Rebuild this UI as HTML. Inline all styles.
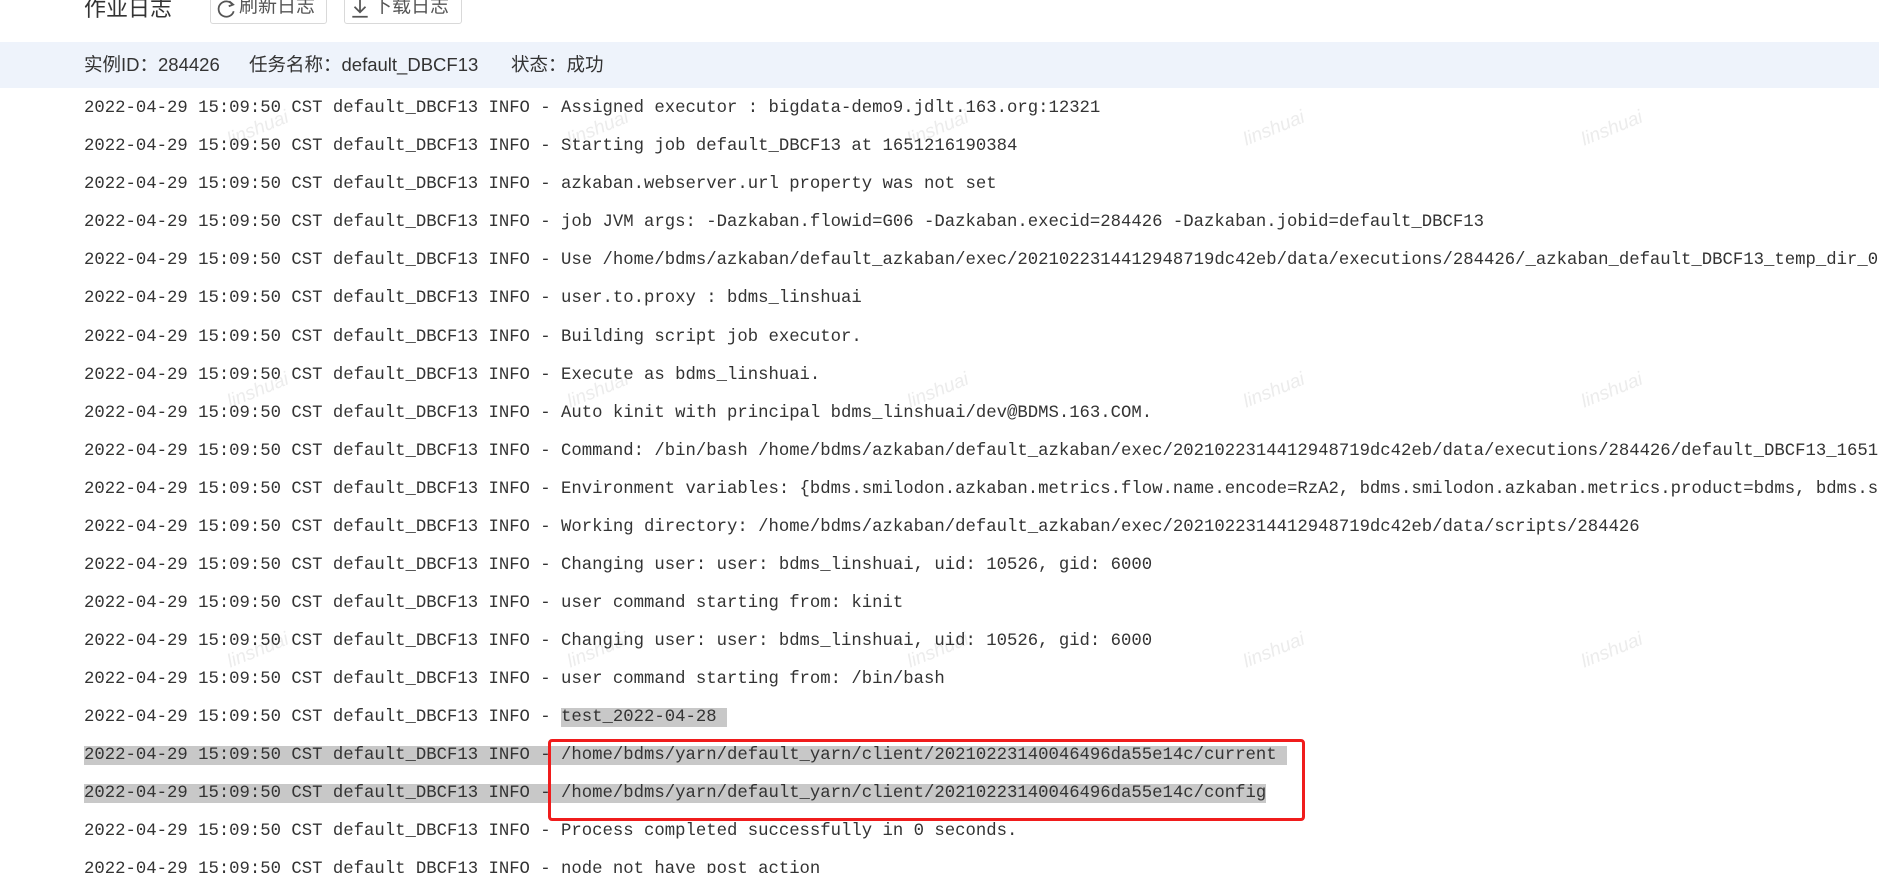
<!DOCTYPE html>
<html><head><meta charset="utf-8">
<style>
html,body{margin:0;padding:0;width:1879px;height:873px;overflow:hidden;background:#fff;position:relative}
.title{position:absolute;left:84px;top:-9px;font:22px "Liberation Sans","Noto Sans CJK SC",sans-serif;color:#333}
.btn{position:absolute;top:-8px;height:32px;border:1px solid #d9d9d9;border-radius:3px;background:#fff;font:19px "Liberation Sans","Noto Sans CJK SC",sans-serif;color:#555;line-height:28px;box-sizing:border-box;padding-left:28px}
.btn svg{position:absolute;left:4px;top:5px}
.banner{position:absolute;left:0;top:42px;width:1879px;height:46px;background:#eef3fb;font:18.5px "Liberation Sans","Noto Sans CJK SC",sans-serif;color:#333;line-height:46px}
.banner span{position:absolute;top:0}
.log{position:absolute;left:84px;font:17.3px "Liberation Mono","DejaVu Sans Mono",monospace;color:#333;white-space:pre;line-height:25px}
.hl{background:#c8c8c8}
.wm{position:absolute;font:italic 19px "Liberation Sans",sans-serif;color:#ececec;transform:rotate(-22deg);white-space:nowrap}
.red{position:absolute;left:548px;top:739px;width:757px;height:82px;border:3px solid #f01c1c;border-radius:4px;box-sizing:border-box}
</style></head><body>
<div class="title">作业日志</div>
<div class="btn" style="left:210px;width:117px"><svg width="22" height="22" viewBox="0 0 20 20"><path d="M16 6A7 7 0 1 0 17 12" fill="none" stroke="#555" stroke-width="1.6"/><path d="M13 3l3.5 3-4 1.5" fill="none" stroke="#555" stroke-width="1.6"/></svg>刷新日志</div>
<div class="btn" style="left:344px;width:118px"><svg width="22" height="22" viewBox="0 0 20 20"><path d="M10 0v13M5 8l5 5 5-5M3 17h14" fill="none" stroke="#555" stroke-width="1.6"/></svg>下载日志</div>
<div class="banner"><span style="left:84px">实例ID：284426</span><span style="left:249px">任务名称：default_DBCF13</span><span style="left:511px">状态：成功</span></div>

<div class="wm" style="left:226px;top:118px">linshuai</div>
<div class="wm" style="left:566px;top:118px">linshuai</div>
<div class="wm" style="left:906px;top:118px">linshuai</div>
<div class="wm" style="left:1242px;top:118px">linshuai</div>
<div class="wm" style="left:1580px;top:118px">linshuai</div>
<div class="wm" style="left:226px;top:380px">linshuai</div>
<div class="wm" style="left:566px;top:380px">linshuai</div>
<div class="wm" style="left:906px;top:380px">linshuai</div>
<div class="wm" style="left:1242px;top:380px">linshuai</div>
<div class="wm" style="left:1580px;top:380px">linshuai</div>
<div class="wm" style="left:226px;top:640px">linshuai</div>
<div class="wm" style="left:566px;top:640px">linshuai</div>
<div class="wm" style="left:906px;top:640px">linshuai</div>
<div class="wm" style="left:1242px;top:640px">linshuai</div>
<div class="wm" style="left:1580px;top:640px">linshuai</div>

<div class="log" style="top:96px">2022-04-29 15:09:50 CST default_DBCF13 INFO - Assigned executor : bigdata-demo9.jdlt.163.org:12321</div>
<div class="log" style="top:134px">2022-04-29 15:09:50 CST default_DBCF13 INFO - Starting job default_DBCF13 at 1651216190384</div>
<div class="log" style="top:172px">2022-04-29 15:09:50 CST default_DBCF13 INFO - azkaban.webserver.url property was not set</div>
<div class="log" style="top:210px">2022-04-29 15:09:50 CST default_DBCF13 INFO - job JVM args: -Dazkaban.flowid=G06 -Dazkaban.execid=284426 -Dazkaban.jobid=default_DBCF13</div>
<div class="log" style="top:248px">2022-04-29 15:09:50 CST default_DBCF13 INFO - Use /home/bdms/azkaban/default_azkaban/exec/2021022314412948719dc42eb/data/executions/284426/_azkaban_default_DBCF13_temp_dir_0</div>
<div class="log" style="top:286px">2022-04-29 15:09:50 CST default_DBCF13 INFO - user.to.proxy : bdms_linshuai</div>
<div class="log" style="top:325px">2022-04-29 15:09:50 CST default_DBCF13 INFO - Building script job executor.</div>
<div class="log" style="top:363px">2022-04-29 15:09:50 CST default_DBCF13 INFO - Execute as bdms_linshuai.</div>
<div class="log" style="top:401px">2022-04-29 15:09:50 CST default_DBCF13 INFO - Auto kinit with principal bdms_linshuai/dev@BDMS.163.COM.</div>
<div class="log" style="top:439px">2022-04-29 15:09:50 CST default_DBCF13 INFO - Command: /bin/bash /home/bdms/azkaban/default_azkaban/exec/2021022314412948719dc42eb/data/executions/284426/default_DBCF13_1651</div>
<div class="log" style="top:477px">2022-04-29 15:09:50 CST default_DBCF13 INFO - Environment variables: {bdms.smilodon.azkaban.metrics.flow.name.encode=RzA2, bdms.smilodon.azkaban.metrics.product=bdms, bdms.s</div>
<div class="log" style="top:515px">2022-04-29 15:09:50 CST default_DBCF13 INFO - Working directory: /home/bdms/azkaban/default_azkaban/exec/2021022314412948719dc42eb/data/scripts/284426</div>
<div class="log" style="top:553px">2022-04-29 15:09:50 CST default_DBCF13 INFO - Changing user: user: bdms_linshuai, uid: 10526, gid: 6000</div>
<div class="log" style="top:591px">2022-04-29 15:09:50 CST default_DBCF13 INFO - user command starting from: kinit</div>
<div class="log" style="top:629px">2022-04-29 15:09:50 CST default_DBCF13 INFO - Changing user: user: bdms_linshuai, uid: 10526, gid: 6000</div>
<div class="log" style="top:667px">2022-04-29 15:09:50 CST default_DBCF13 INFO - user command starting from: /bin/bash</div>
<div class="log" style="top:705px">2022-04-29 15:09:50 CST default_DBCF13 INFO - <span class="hl">test_2022-04-28 </span></div>
<div class="log" style="top:743px"><span class="hl">2022-04-29 15:09:50 CST default_DBCF13 INFO - /home/bdms/yarn/default_yarn/client/20210223140046496da55e14c/current </span></div>
<div class="log" style="top:781px"><span class="hl">2022-04-29 15:09:50 CST default_DBCF13 INFO - /home/bdms/yarn/default_yarn/client/20210223140046496da55e14c/config</span></div>
<div class="log" style="top:819px">2022-04-29 15:09:50 CST default_DBCF13 INFO - Process completed successfully in 0 seconds.</div>
<div class="log" style="top:857px">2022-04-29 15:09:50 CST default_DBCF13 INFO - node not have post action</div>
<div class="red"></div>
</body></html>
